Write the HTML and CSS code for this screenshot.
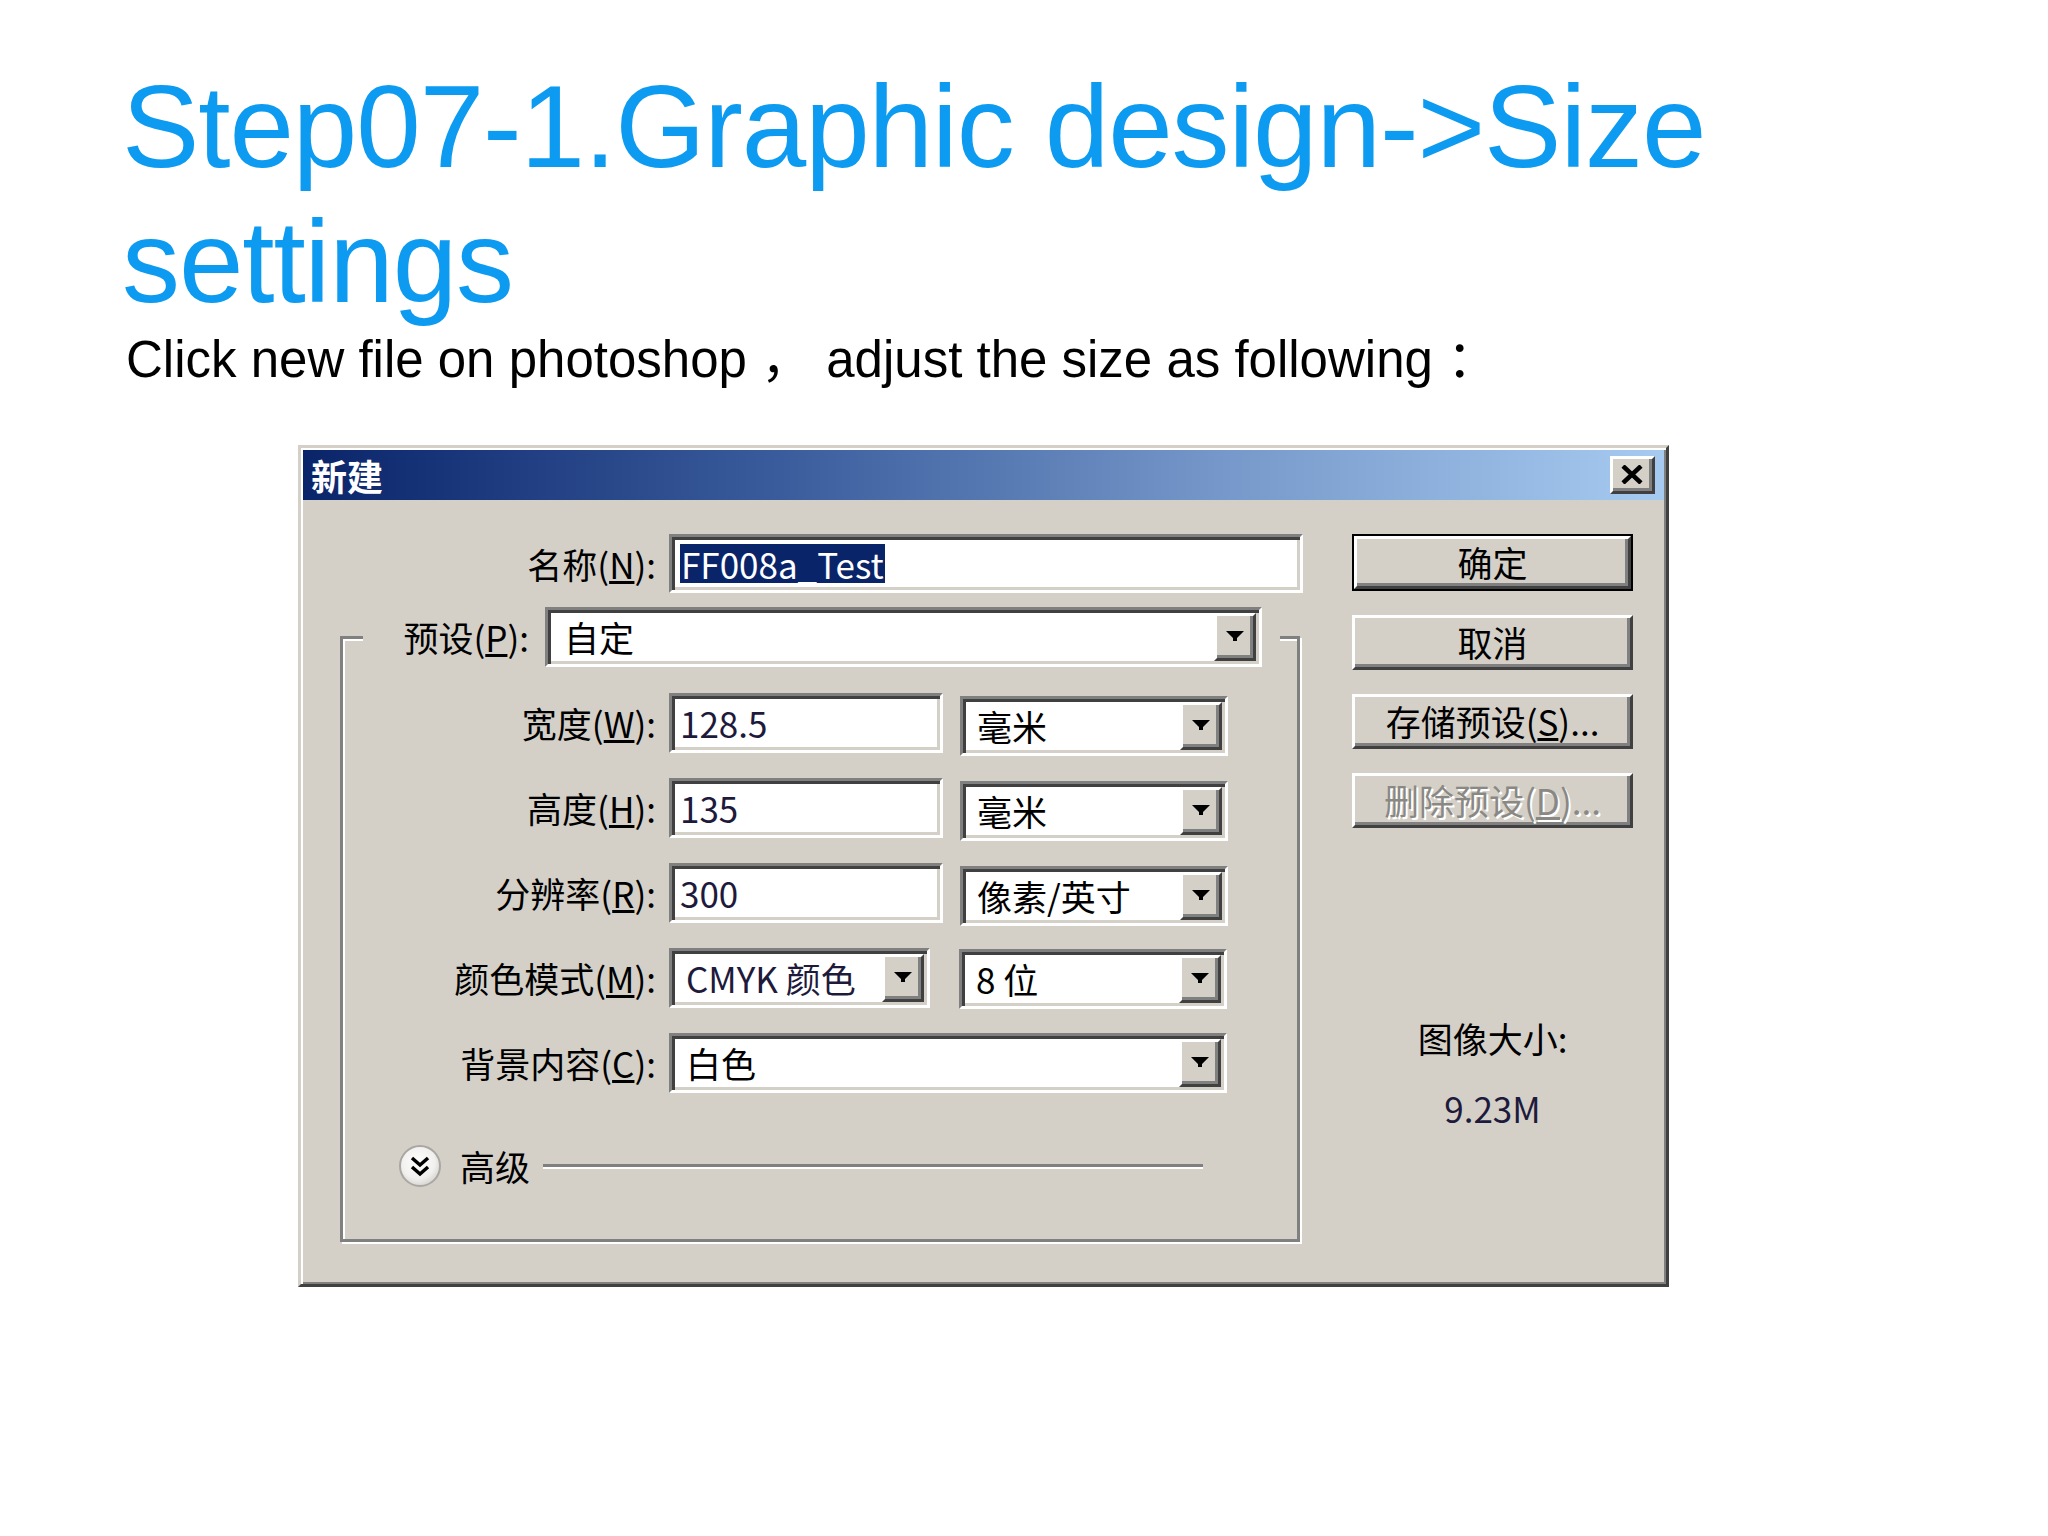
FILE: index.html
```html
<!DOCTYPE html>
<html lang="zh-CN">
<head>
<meta charset="utf-8">
<title>Step07-1 Graphic design - Size settings</title>
<link rel="stylesheet" href="styles.css">
</head>
<body>
<div class="slide">
  <h1 class="title">Step07-1.Graphic design-&gt;Size settings</h1>
  <p class="subtitle">Click new file on photoshop ，&nbsp;adjust the size as following ：</p>

  <div class="dialog">
    <div class="titlebar">
      <span class="caption">新建</span>
      <span class="close-btn raised">
        <svg width="22" height="19" viewBox="0 0 22 19"><path d="M2 1 L20 18 M20 1 L2 18" stroke="#000" stroke-width="4.5" fill="none"/></svg>
      </span>
    </div>

    <div class="dlg-body">
      <div class="main">
        <div class="name-row">
          <span class="lbl lbl-name">名称(<u>N</u>):</span>
          <div class="field sunken name-field"><span class="sel">FF008a_Test</span></div>
        </div>

        <fieldset class="group">
          <legend class="group-legend">
            <div class="legend-inner">
              <span class="lbl-preset">预设(<u>P</u>):</span>
              <div class="combo sunken preset-combo">
                <span class="combo-text">自定</span>
                <span class="dd raised"><svg width="20" height="12" viewBox="0 0 20 12"><polygon points="1,1 19,1 12,8 12,11 8,11 8,8" fill="#000"/></svg></span>
              </div>
            </div>
          </legend>

          <div class="row first">
            <span class="lbl">宽度(<u>W</u>):</span>
            <div class="field sunken num-field"><span class="val">128.5</span></div>
            <div class="combo sunken unit-combo">
              <span class="combo-text">毫米</span>
              <span class="dd raised"><svg width="20" height="12" viewBox="0 0 20 12"><polygon points="1,1 19,1 12,8 12,11 8,11 8,8" fill="#000"/></svg></span>
            </div>
          </div>

          <div class="row">
            <span class="lbl">高度(<u>H</u>):</span>
            <div class="field sunken num-field"><span class="val">135</span></div>
            <div class="combo sunken unit-combo">
              <span class="combo-text">毫米</span>
              <span class="dd raised"><svg width="20" height="12" viewBox="0 0 20 12"><polygon points="1,1 19,1 12,8 12,11 8,11 8,8" fill="#000"/></svg></span>
            </div>
          </div>

          <div class="row">
            <span class="lbl">分辨率(<u>R</u>):</span>
            <div class="field sunken num-field"><span class="val">300</span></div>
            <div class="combo sunken unit-combo">
              <span class="combo-text">像素/英寸</span>
              <span class="dd raised"><svg width="20" height="12" viewBox="0 0 20 12"><polygon points="1,1 19,1 12,8 12,11 8,11 8,8" fill="#000"/></svg></span>
            </div>
          </div>

          <div class="row">
            <span class="lbl">颜色模式(<u>M</u>):</span>
            <div class="combo sunken mode-combo">
              <span class="combo-text val">CMYK 颜色</span>
              <span class="dd raised"><svg width="20" height="12" viewBox="0 0 20 12"><polygon points="1,1 19,1 12,8 12,11 8,11 8,8" fill="#000"/></svg></span>
            </div>
            <div class="combo sunken unit-combo bits-combo">
              <span class="combo-text">8 位</span>
              <span class="dd raised"><svg width="20" height="12" viewBox="0 0 20 12"><polygon points="1,1 19,1 12,8 12,11 8,11 8,8" fill="#000"/></svg></span>
            </div>
          </div>

          <div class="row">
            <span class="lbl">背景内容(<u>C</u>):</span>
            <div class="combo sunken bg-combo">
              <span class="combo-text">白色</span>
              <span class="dd raised"><svg width="20" height="12" viewBox="0 0 20 12"><polygon points="1,1 19,1 12,8 12,11 8,11 8,8" fill="#000"/></svg></span>
            </div>
          </div>

          <div class="advanced">
            <span class="adv-icon">
              <svg width="44" height="44" viewBox="0 0 44 44">
                <defs>
                  <radialGradient id="advg" cx="45%" cy="40%" r="60%">
                    <stop offset="0" stop-color="#ffffff"/>
                    <stop offset="0.7" stop-color="#f1f0ee"/>
                    <stop offset="1" stop-color="#d8d6d2"/>
                  </radialGradient>
                </defs>
                <circle cx="22" cy="22" r="20" fill="url(#advg)" stroke="#a9a7a2" stroke-width="2"/>
                <polyline points="14,14 22,21 30,14" fill="none" stroke="#000" stroke-width="3.5"/>
                <polyline points="14,23 22,30 30,23" fill="none" stroke="#000" stroke-width="3.5"/>
              </svg>
            </span>
            <span class="adv-text">高级</span>
            <span class="adv-line"></span>
          </div>
        </fieldset>
      </div>

      <div class="side">
        <div class="btn-default"><div class="btn raised">确定</div></div>
        <div class="btn raised">取消</div>
        <div class="btn raised">存储预设(<u>S</u>)...</div>
        <div class="btn raised disabled">删除预设(<u>D</u>)...</div>
        <div class="img-size-label">图像大小:</div>
        <div class="img-size-value">9.23M</div>
      </div>
    </div>
  </div>
</div>
</body>
</html>
```

FILE: styles.css
```css
* { box-sizing: border-box; }

html, body {
  margin: 0;
  padding: 0;
  background: #ffffff;
}

body {
  width: 2048px;
  height: 1536px;
  overflow: hidden;
}

.slide {
  padding: 60px 0 0 122px;
}

.title {
  margin: 0;
  max-width: 1700px;
  font: 400 116px/135px "Liberation Sans", Arial, sans-serif;
  letter-spacing: -1.1px;
  color: #0d9bf1;
}

.subtitle {
  margin: 0 0 0 4px;
  font: 400 51px/60px "Liberation Sans", "Noto Sans CJK SC", sans-serif;
  color: #000;
}

/* ---------- dialog ---------- */
.dialog {
  margin: 55px 0 0 176px;
  width: 1371px;
  height: 842px;
  padding: 2px;
  background: #d4d0c8;
  border: 3px solid;
  border-color: #d4d0c8 #404040 #404040 #d4d0c8;
  box-shadow: inset 2px 2px 0 #ffffff, inset -2px -2px 0 #808080;
  font-family: "Noto Sans CJK SC", sans-serif;
  font-size: 35px;
  line-height: 44px;
  color: #000;
}

.titlebar {
  height: 50px;
  display: flex;
  align-items: center;
  justify-content: space-between;
  padding: 0 9px 0 8px;
  background: linear-gradient(to right, #0a246a 0%, #3a5c9c 35%, #7a9ccd 70%, #a6caf0 100%);
}

.caption {
  color: #fff;
  font-size: 36px;
  font-weight: 700;
  line-height: 1;
}

.raised {
  background: #d4d0c8;
  border: 3px solid;
  border-color: #ffffff #404040 #404040 #ffffff;
  box-shadow: inset -3px -3px 0 #808080;
}

.sunken {
  background: #ffffff;
  border: 3px solid;
  border-color: #808080 #ffffff #ffffff #808080;
  box-shadow: inset 3px 3px 0 #404040, inset -3px -3px 0 #d4d0c8;
}

.close-btn {
  width: 45px;
  height: 38px;
  display: flex;
  align-items: center;
  justify-content: center;
  padding-bottom: 2px;
  padding-right: 2px;
}

.dlg-body {
  display: flex;
  align-items: flex-start;
  padding: 34px 0 0 37px;
}

.main {
  width: 963px;
  flex: none;
}

.name-row {
  display: flex;
  align-items: center;
  height: 59px;
}

.lbl {
  flex: none;
  text-align: right;
  white-space: nowrap;
}

.lbl-name {
  width: 316px;
  margin-right: 13px;
}

.field {
  display: flex;
  align-items: center;
  padding: 0 6px 0 8px;
  flex: none;
}

.name-field {
  width: 634px;
  height: 59px;
}

.sel {
  background: #0a246a;
  color: #fff;
  line-height: 39px;
  padding: 0 1px;
}

.val {
  color: #1e1a3c;
}

/* ---------- group box ---------- */
.group {
  margin: 14px 0 0 0;
  padding: 0 0 51px 0;
  width: 960px;
  min-inline-size: 0;
  border: 3px solid #808080;
  box-shadow: inset 2px 2px 0 #ffffff, 2px 2px 0 #ffffff;
}

.group-legend {
  margin-left: 20px;
  padding: 0;
  background: #d4d0c8;
}

.legend-inner {
  display: flex;
  align-items: center;
  height: 60px;
  padding-right: 18px;
}

.lbl-preset {
  width: 166px;
  margin-right: 16px;
  text-align: right;
  white-space: nowrap;
}

.combo {
  display: flex;
  align-items: stretch;
  padding: 3px;
  flex: none;
  height: 60px;
}

.combo-text {
  flex: 1;
  display: flex;
  align-items: center;
  padding-left: 13px;
  white-space: nowrap;
}

.dd {
  flex: none;
  width: 42px;
  display: flex;
  align-items: center;
  justify-content: center;
  padding-bottom: 3px;
}

.preset-combo { width: 717px; }

.row {
  display: flex;
  align-items: center;
  height: 60px;
  margin-top: 25px;
}

.row.first { margin-top: 26px; }

.row .lbl {
  width: 313px;
  margin-right: 13px;
}

.num-field {
  width: 274px;
  height: 60px;
}

.unit-combo {
  width: 268px;
  margin-left: 17px;
  margin-top: 6px;
}

.unit-combo .combo-text { padding-left: 11px; }

.mode-combo {
  width: 261px;
}

.mode-combo .combo-text { padding-left: 11px; }

.bits-combo {
  margin-left: 29px;
  margin-top: 2px;
}

.bg-combo {
  width: 558px;
}

.bg-combo .combo-text { padding-left: 11px; }

.advanced {
  display: flex;
  align-items: center;
  height: 44px;
  margin-top: 51px;
  padding-left: 55px;
}

.adv-icon {
  width: 44px;
  height: 44px;
  flex: none;
  display: block;
}

.adv-icon svg { display: block; }

.adv-text {
  width: 83px;
  margin-left: 18px;
  flex: none;
}

.adv-line {
  width: 660px;
  height: 5px;
  flex: none;
  border-top: 3px solid #808080;
  border-bottom: 2px solid #ffffff;
}

/* ---------- right column ---------- */
.side {
  margin-left: 49px;
  width: 281px;
  flex: none;
  display: flex;
  flex-direction: column;
}

.btn {
  height: 55px;
  margin-top: 24px;
  display: flex;
  align-items: center;
  justify-content: center;
  white-space: nowrap;
  padding-bottom: 2px;
}

.btn-default {
  border: 2px solid #000;
  height: 57px;
}

.btn-default .btn {
  margin-top: 0;
  height: 53px;
}

.btn.disabled {
  color: #8a8883;
  text-shadow: 2px 2px 0 #ffffff;
}

.img-size-label {
  margin-top: 188px;
  text-align: center;
}

.img-size-value {
  margin-top: 26px;
  text-align: center;
  color: #1e1a3c;
}
```
